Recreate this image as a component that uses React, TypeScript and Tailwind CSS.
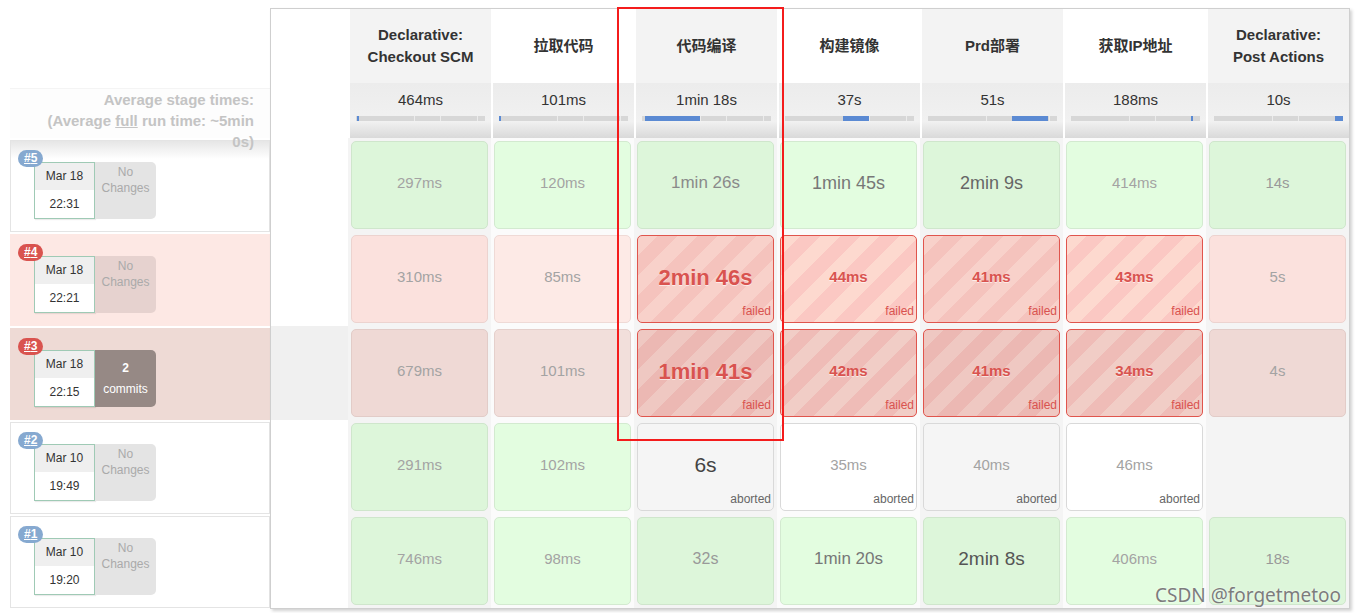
type Kind = 'ok' | 'fail' | 'abort' | 'empty';

interface StageCell {
  t?: string;
  cls?: string;
  kind: Kind;
}

interface BuildRow {
  id: number;
  status: 'success' | 'failed' | 'aborted';
  tone: 'plain' | 'light' | 'dark';
  date: string;
  time: string;
  commits?: number;
  cells: StageCell[];
}

const stages = [
  { name: ['Declarative:', 'Checkout SCM'], avg: '464ms', start: 0.5, width: 0 },
  { name: ['拉取代码'], avg: '101ms', start: 0, width: 0 },
  { name: ['代码编译'], avg: '1min 18s', start: 2, width: 43 },
  { name: ['构建镜像'], avg: '37s', start: 45, width: 20 },
  { name: ['Prd部署'], avg: '51s', start: 65, width: 28 },
  { name: ['获取IP地址'], avg: '188ms', start: 93, width: 0 },
  { name: ['Declarative:', 'Post Actions'], avg: '10s', start: 94, width: 6 },
];

const small = 'text-[15px] text-[#a3a3a3]';
const failBig = 'text-[22px]';
const failSmall = 'text-[15px]';

const builds: BuildRow[] = [
  {
    id: 5,
    status: 'success',
    tone: 'plain',
    date: 'Mar 18',
    time: '22:31',
    cells: [
      { kind: 'ok', t: '297ms', cls: small },
      { kind: 'ok', t: '120ms', cls: small },
      { kind: 'ok', t: '1min 26s', cls: 'text-[17px] text-[#8a8a8a]' },
      { kind: 'ok', t: '1min 45s', cls: 'text-[18px] text-[#777]' },
      { kind: 'ok', t: '2min 9s', cls: 'text-[18px] text-[#666]' },
      { kind: 'ok', t: '414ms', cls: small },
      { kind: 'ok', t: '14s', cls: 'text-[15px] text-[#999]' },
    ],
  },
  {
    id: 4,
    status: 'failed',
    tone: 'light',
    date: 'Mar 18',
    time: '22:21',
    cells: [
      { kind: 'ok', t: '310ms', cls: small },
      { kind: 'ok', t: '85ms', cls: small },
      { kind: 'fail', t: '2min 46s', cls: failBig },
      { kind: 'fail', t: '44ms', cls: failSmall },
      { kind: 'fail', t: '41ms', cls: failSmall },
      { kind: 'fail', t: '43ms', cls: failSmall },
      { kind: 'ok', t: '5s', cls: small },
    ],
  },
  {
    id: 3,
    status: 'failed',
    tone: 'dark',
    date: 'Mar 18',
    time: '22:15',
    commits: 2,
    cells: [
      { kind: 'ok', t: '679ms', cls: small },
      { kind: 'ok', t: '101ms', cls: small },
      { kind: 'fail', t: '1min 41s', cls: failBig },
      { kind: 'fail', t: '42ms', cls: failSmall },
      { kind: 'fail', t: '41ms', cls: failSmall },
      { kind: 'fail', t: '34ms', cls: failSmall },
      { kind: 'ok', t: '4s', cls: small },
    ],
  },
  {
    id: 2,
    status: 'aborted',
    tone: 'plain',
    date: 'Mar 10',
    time: '19:49',
    cells: [
      { kind: 'ok', t: '291ms', cls: small },
      { kind: 'ok', t: '102ms', cls: small },
      { kind: 'abort', t: '6s', cls: 'text-[21px] text-[#444]' },
      { kind: 'abort', t: '35ms', cls: small },
      { kind: 'abort', t: '40ms', cls: small },
      { kind: 'abort', t: '46ms', cls: small },
      { kind: 'empty' },
    ],
  },
  {
    id: 1,
    status: 'success',
    tone: 'plain',
    date: 'Mar 10',
    time: '19:20',
    cells: [
      { kind: 'ok', t: '746ms', cls: small },
      { kind: 'ok', t: '98ms', cls: small },
      { kind: 'ok', t: '32s', cls: 'text-[16px] text-[#999]' },
      { kind: 'ok', t: '1min 20s', cls: 'text-[17px] text-[#777]' },
      { kind: 'ok', t: '2min 8s', cls: 'text-[19px] text-[#555]' },
      { kind: 'ok', t: '406ms', cls: small },
      { kind: 'ok', t: '18s', cls: 'text-[15px] text-[#999]' },
    ],
  },
];

// box colours: [grey column, white column]
const okBg = {
  plain: ['bg-[#ddf6da] border-[#cfe6cc]', 'bg-[#e3fde0] border-[#d3ead0]'],
  light: ['bg-[#fbe1dd] border-[#ecd3cf]', 'bg-[#fdeae6] border-[#efdad6]'],
  dark: ['bg-[#efd9d5] border-[#e2ccc8]', 'bg-[#f2dfdb] border-[#e5d0cc]'],
};

const failBg = {
  plain: ['', ''],
  light: [
    'bg-[repeating-linear-gradient(135deg,#f8d1ca_0px,#f8d1ca_14px,#f5c3bd_14px,#f5c3bd_28px)]',
    'bg-[repeating-linear-gradient(135deg,#fdd9cf_0px,#fdd9cf_14px,#fbc8c3_14px,#fbc8c3_28px)]',
  ],
  dark: [
    'bg-[repeating-linear-gradient(135deg,#efc8c2_0px,#efc8c2_14px,#ecb8b3_14px,#ecb8b3_28px)]',
    'bg-[repeating-linear-gradient(135deg,#f1cdc6_0px,#f1cdc6_14px,#efbcb7_14px,#efbcb7_28px)]',
  ],
};

function DataCell({ cell, col, tone }: { cell: StageCell; col: number; tone: BuildRow['tone'] }) {
  const odd = col % 2;
  const colBg = odd ? 'bg-[#fbfbfb]' : 'bg-[#f4f4f4]';
  if (cell.kind === 'empty') {
    return <div className={`h-full ${colBg}`} />;
  }

  let box = 'relative flex h-full items-center justify-center rounded-[5px] border pb-1';
  if (cell.kind === 'ok') box += ` ${okBg[tone][odd]}`;
  if (cell.kind === 'fail') box += ` border-[#e0554d] ${failBg[tone][odd]}`;
  if (cell.kind === 'abort') box += odd ? ' bg-white border-[#d9d9d9]' : ' bg-[#f5f5f5] border-[#d9d9d9]';

  return (
    <div className={`h-full p-[3px] ${colBg}`}>
      <div className={box}>
        {cell.kind === 'fail' ? (
          <span className={`font-bold text-[#d9534f] [text-shadow:0_1px_0_rgba(255,255,255,0.6)] ${cell.cls}`}>
            {cell.t}
          </span>
        ) : (
          <span className={cell.cls}>{cell.t}</span>
        )}
        {cell.kind === 'fail' && (
          <span className="absolute bottom-[5px] right-[2px] text-[12px] leading-none text-[#d9534f]">failed</span>
        )}
        {cell.kind === 'abort' && (
          <span className="absolute bottom-[5px] right-[2px] text-[12px] leading-none text-[#666]">aborted</span>
        )}
      </div>
    </div>
  );
}

function AvgBar({ start, width }: { start: number; width: number }) {
  return (
    <div className="relative mx-auto mt-[6px] h-[5px] w-[129px] bg-[#d7d7d7]">
      <span className="absolute left-[45%] top-0 h-full w-px bg-[#ececec]" />
      <span className="absolute left-[65%] top-0 h-full w-px bg-[#ececec]" />
      <span className="absolute left-[94%] top-0 h-full w-px bg-[#ececec]" />
      <span
        className="absolute top-0 h-full bg-[#5b8ad3]"
        style={{ left: `${start}%`, width: width ? `${width}%` : '2px' }}
      />
    </div>
  );
}

function StageTable() {
  const grid = 'grid grid-cols-[77px_repeat(7,143px)]';
  return (
    <div className="border border-[#cfcfcf] bg-white shadow-[2px_2px_3px_rgba(0,0,0,0.18)]">
      <div className={`${grid} h-[74px]`}>
        <div className="bg-white" />
        {stages.map((s, i) => (
          <div
            key={i}
            className={`flex flex-col items-center justify-center border-l-2 border-white text-[15px] font-bold leading-[22px] text-[#333] ${
              i % 2 ? 'bg-white' : 'bg-[#f3f3f3]'
            }`}
          >
            {s.name.map((l) => (
              <span key={l}>{l}</span>
            ))}
          </div>
        ))}
      </div>
      <div className={`${grid} h-[55px]`}>
        <div className="bg-white" />
        {stages.map((s, i) => (
          <div
            key={i}
            className="border-l-2 border-white bg-[linear-gradient(to_bottom,#ececec_0%,#f1f1f1_70%,#d9d9d9_100%)] pt-[7px] text-center"
          >
            <div className="text-[15px] leading-[20px] text-[#333]">{s.avg}</div>
            <AvgBar start={s.start} width={s.width} />
          </div>
        ))}
      </div>
      {builds.map((b) => (
        <div key={b.id} className={`${grid} h-[94px]`}>
          <div className={b.tone === 'dark' ? 'bg-[#f0f0f0]' : 'bg-white'} />
          {b.cells.map((c, i) => (
            <DataCell key={i} cell={c} col={i} tone={b.tone} />
          ))}
        </div>
      ))}
    </div>
  );
}

function BuildInfo({ b, first }: { b: BuildRow; first: boolean }) {
  const rowBg =
    b.tone === 'light'
      ? 'bg-[#fde8e4] border-[#fde8e4]'
      : b.tone === 'dark'
        ? 'bg-[#eedad5] border-[#eedad5]'
        : first
          ? 'bg-[linear-gradient(to_bottom,#e6e6e6_0px,#ffffff_18px)] border-[#e4e4e4]'
          : 'bg-white border-[#e4e4e4]';
  const badge = b.status === 'failed' ? 'bg-[#d9534f]' : 'bg-[#86a9d0]';
  return (
    <div className={`mt-[2px] h-[92px] border pl-[7px] pt-[9px] ${rowBg}`}>
      <div
        className={`relative z-10 block h-[17px] w-fit rounded-full px-[6px] text-[12px] font-bold leading-[17px] text-white underline ${badge}`}
      >
        #{b.id}
      </div>
      <div className="-mt-[5px] ml-[16px] flex">
        <div className="w-[61px] border border-[#9fcab5] text-center text-[12px] text-[#333] shadow-[1px_1px_1px_rgba(0,0,0,0.08)]">
          <div className="h-[27px] bg-[#efefef] leading-[27px]">{b.date}</div>
          <div className="h-[28px] bg-white leading-[28px]">{b.time}</div>
        </div>
        {b.commits ? (
          <div className="flex h-[57px] w-[61px] flex-col items-center justify-center rounded-r-[5px] bg-[#968985] text-[12px] leading-[21px] text-white">
            <span className="font-bold">{b.commits}</span>
            <span>commits</span>
          </div>
        ) : (
          <div
            className={`h-[57px] w-[61px] rounded-r-[5px] pt-[2px] text-center text-[12px] leading-[16px] text-[#aaa] ${
              b.tone === 'light' ? 'bg-[#e6d2cf]' : 'bg-[#e4e4e4]'
            }`}
          >
            No
            <br />
            Changes
          </div>
        )}
      </div>
    </div>
  );
}

export default function App() {
  return (
    <div className="relative h-[613px] w-[1356px] overflow-hidden bg-white font-['Liberation_Sans',Arial,'Noto_Sans_CJK_SC',sans-serif]">
      <div className="flex pl-[10px] pt-[8px]">
        <div className="w-[260px] shrink-0">
          <div className="h-[80px]" />
          <div className="h-[50px] border-t border-[#f4f4f4] bg-[#fdfdfd] pr-[16px]">
            <p className="ml-auto w-[222px] text-right text-[15px] font-bold leading-[21px] text-[#c4c4c4]">
              Average stage times:
              <br />
              (Average <span className="underline">full</span> run time: ~5min 0s)
            </p>
          </div>
          {builds.map((b, i) => (
            <BuildInfo key={b.id} b={b} first={i === 0} />
          ))}
        </div>
        <StageTable />
      </div>

      <div className="pointer-events-none absolute left-[617px] top-[7px] h-[434px] w-[167px] border-2 border-[#f41c1c]" />

      <div className="pointer-events-none absolute bottom-[8px] right-[15px] font-['Noto_Sans',sans-serif] text-[19px] leading-none text-[#7c7c7c] [text-shadow:0_0_2px_#fff]">
        CSDN @forgetmetoo
      </div>
    </div>
  );
}
